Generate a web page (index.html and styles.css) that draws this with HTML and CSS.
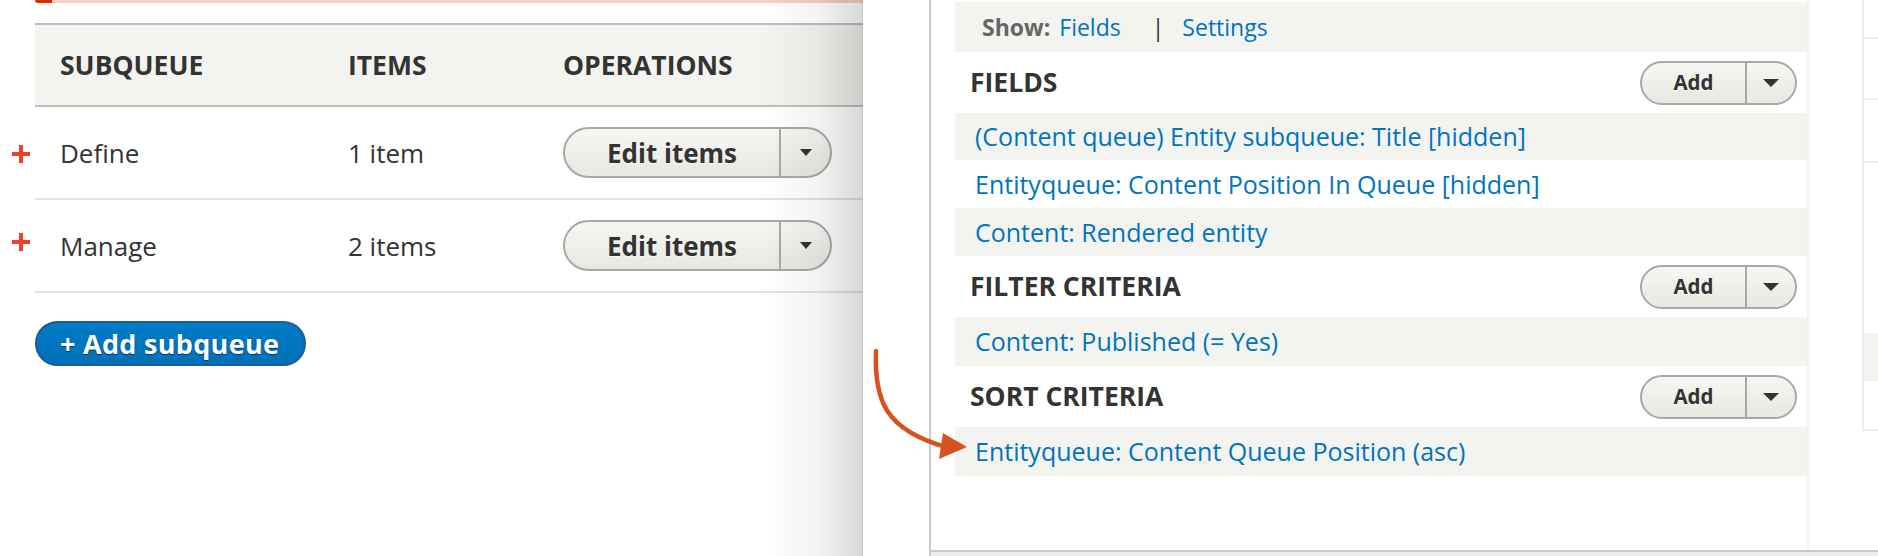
FILE: index.html
```html
<!DOCTYPE html>
<html lang="en">
<head>
<meta charset="utf-8">
<title>Entityqueue subqueues and view</title>
<link rel="stylesheet" href="styles.css">
</head>
<body>
<div class="page">
  <section class="left">
    <div class="msg-edge"></div>
    <div class="table">
      <div class="thead">
        <div class="th">Subqueue</div>
        <div class="th">Items</div>
        <div class="th">Operations</div>
      </div>
      <div class="tr">
        <div class="handle"><span class="cross"></span></div>
        <div class="cells">
          <div class="td">Define</div>
          <div class="td">1 item</div>
          <div class="td">
            <div class="dropbutton big"><span class="db-main">Edit items</span><span class="db-toggle"><span class="tri"></span></span></div>
          </div>
        </div>
      </div>
      <div class="tr">
        <div class="handle up"><span class="cross"></span></div>
        <div class="cells">
          <div class="td">Manage</div>
          <div class="td">2 items</div>
          <div class="td">
            <div class="dropbutton big"><span class="db-main">Edit items</span><span class="db-toggle"><span class="tri"></span></span></div>
          </div>
        </div>
      </div>
    </div>
    <a class="btn-primary">+ Add subqueue</a>
  </section>

  <section class="right">
    <div class="views-area">
      <div class="views-box">
        <div class="main-col">
          <div class="show-row">
            <span class="show-label">Show:</span>
            <a class="link">Fields</a>
            <span class="pipe">|</span>
            <a class="link">Settings</a>
          </div>

          <div class="vhead first">
            <h3>Fields</h3>
            <div class="dropbutton small"><span class="db-main">Add</span><span class="db-toggle"><span class="tri"></span></span></div>
          </div>
          <div class="vrow gray short"><a class="link">(Content queue) Entity subqueue: Title [hidden]</a></div>
          <div class="vrow"><a class="link">Entityqueue: Content Position In Queue [hidden]</a></div>
          <div class="vrow gray"><a class="link">Content: Rendered entity</a></div>

          <div class="vhead">
            <h3>Filter criteria</h3>
            <div class="dropbutton small"><span class="db-main">Add</span><span class="db-toggle"><span class="tri"></span></span></div>
          </div>
          <div class="vrow gray tall"><a class="link">Content: Published (= Yes)</a></div>

          <div class="vhead">
            <h3>Sort criteria</h3>
            <div class="dropbutton small"><span class="db-main">Add</span><span class="db-toggle"><span class="tri"></span></span></div>
          </div>
          <div class="vrow gray tall"><a class="link">Entityqueue: Content Queue Position (asc)</a></div>
        </div>
        <div class="side-col">
          <div class="side-box">
            <div class="sb a"></div>
            <div class="sb b"></div>
            <div class="sb c"></div>
            <div class="sb-space"></div>
            <div class="sb-gray"></div>
            <div class="sb-end"></div>
          </div>
        </div>
      </div>
    </div>
  </section>

  <svg class="arrow" width="120" height="140" viewBox="0 0 120 140" aria-hidden="true">
    <path d="M16 21 C 14 70, 25 100, 86 117" fill="none" stroke="#d6531f" stroke-width="4.5" stroke-linecap="round"/>
    <polygon points="107,117 83,103 79,129" fill="#d6531f"/>
  </svg>
</div>
</body>
</html>
```

FILE: styles.css
```css
* { box-sizing: border-box; }

html, body {
  margin: 0;
  padding: 0;
  background: #ffffff;
}

body {
  font-family: "Open Sans", "DejaVu Sans", sans-serif;
  color: #333333;
  line-height: 1;
}

.page {
  position: relative;
  display: flex;
  width: 1878px;
  height: 556px;
  overflow: hidden;
}

/* ---------- left panel ---------- */
.left {
  position: relative;
  width: 863px;
  flex: none;
  background: #ffffff;
}

.left::after {
  content: "";
  position: absolute;
  top: 0;
  right: 0;
  bottom: 0;
  width: 98px;
  background: linear-gradient(to right, rgba(0,0,0,0) 0%, rgba(0,0,0,0.05) 55%, rgba(0,0,0,0.15) 98%, rgba(0,0,0,0.22) 100%);
  pointer-events: none;
}

.msg-edge {
  margin-left: 35px;
  height: 3px;
  background: #f8cdc4;
  border-left: 17px solid #e32700;
  border-bottom-left-radius: 6px;
}

.table {
  margin-top: 20px;
}

.thead {
  margin-left: 35px;
  height: 84px;
  padding-left: 25px;
  background: #f3f3ef;
  border-top: 2px solid #bebfb9;
  border-bottom: 2px solid #bebfb9;
  display: grid;
  grid-template-columns: 288px 215px 1fr;
  align-items: center;
}

.th {
  font-size: 26.5px;
  font-weight: 700;
  text-transform: uppercase;
  color: #333333;
}

.tr {
  display: flex;
}

.handle {
  width: 35px;
  flex: none;
  display: flex;
  align-items: center;
  padding-left: 12px;
}

.handle.up {
  padding-bottom: 10px;
}

.cross {
  position: relative;
  display: block;
  width: 18px;
  height: 18px;
  background:
    linear-gradient(#f0402a, #f0402a) center / 18px 4px no-repeat,
    linear-gradient(#f0402a, #f0402a) center / 4px 18px no-repeat;
}

.cells {
  flex: 1;
  height: 93px;
  padding-left: 25px;
  border-bottom: 2px solid #e3e2dd;
  display: grid;
  grid-template-columns: 288px 215px 1fr;
  align-items: center;
}

.td {
  font-size: 26px;
  color: #333333;
}

/* ---------- dropbuttons ---------- */
.dropbutton {
  display: inline-flex;
  border: 2px solid #a8a8a6;
  border-radius: 30px;
  background: linear-gradient(to bottom, #f6f6f3, #e8e8e2);
  overflow: hidden;
  color: #333333;
  font-weight: 700;
  text-shadow: 0 1px 0 rgba(255,255,255,0.7);
}

.db-main {
  display: flex;
  align-items: center;
  justify-content: center;
  border-right: 2px solid #a8a8a6;
}

.db-toggle {
  display: flex;
  align-items: center;
  justify-content: center;
}

.tri {
  display: block;
  width: 0;
  height: 0;
}

.dropbutton.big {
  height: 51px;
  width: 269px;
}
.dropbutton.big .db-main {
  width: 216px;
  font-size: 26px;
}
.dropbutton.big .db-toggle {
  flex: 1;
}
.dropbutton.big .tri {
  border-left: 6px solid transparent;
  border-right: 6px solid transparent;
  border-top: 7px solid #333333;
}

.dropbutton.small {
  height: 44px;
  width: 157px;
}
.dropbutton.small .db-main {
  width: 105px;
  font-size: 20.5px;
}
.dropbutton.small .db-toggle {
  flex: 1;
}
.dropbutton.small .tri {
  border-left: 8px solid transparent;
  border-right: 8px solid transparent;
  border-top: 8px solid #333333;
}

/* ---------- primary button ---------- */
.btn-primary {
  display: flex;
  align-items: center;
  margin: 28px 0 0 35px;
  width: 271px;
  height: 45px;
  padding-left: 23px;
  border: 2px solid #1e5c90;
  border-radius: 24px;
  background: linear-gradient(to bottom, #007bc6, #0071b8);
  color: #ffffff;
  font-size: 27px;
  font-weight: 700;
  letter-spacing: 0.3px;
  text-shadow: 0 1px 1px rgba(0,0,0,0.5);
}

/* ---------- right panel ---------- */
.right {
  flex: 1;
  display: flex;
  padding-left: 66px;
  background: #ffffff;
}

.views-area {
  flex: 1;
  border-left: 2px solid #c9c9c7;
  background: #ececea;
}

.views-box {
  height: 552px;
  padding-left: 24px;
  background: #ffffff;
  border-bottom: 2px solid #c9c9c7;
  display: flex;
}

.main-col {
  width: 854px;
  flex: none;
  padding-top: 2px;
  border-right: 2px solid #f1f1ef;
}

.link {
  color: #0074bd;
  text-decoration: none;
}

.show-row {
  height: 50px;
  background: #f3f3ef;
  padding-left: 27px;
  display: flex;
  align-items: center;
  font-size: 23px;
}

.show-label {
  color: #666666;
  font-weight: 700;
  margin-right: 9px;
}

.pipe {
  color: #333333;
  margin: 0 18px 0 31px;
}

.vhead {
  height: 61px;
  padding: 0 10px 0 15px;
  background: #ffffff;
  display: flex;
  align-items: center;
  justify-content: space-between;
}

.vhead h3 {
  margin: 0;
  font-size: 26.5px;
  font-weight: 700;
  text-transform: uppercase;
  color: #333333;
}

.vrow {
  height: 48px;
  padding-left: 20px;
  display: flex;
  align-items: center;
  font-size: 25px;
  background: #ffffff;
}

.vrow.gray {
  background: #f3f3ef;
}

.vrow.short {
  height: 47px;
}

.vrow.tall {
  height: 49px;
}

.side-col {
  flex: 1;
  padding-left: 53px;
}

.side-box {
  height: 431px;
  border-left: 2px solid #ededeb;
  border-bottom: 2px solid #ededeb;
  display: flex;
  flex-direction: column;
}

.sb {
  border-bottom: 2px solid #ededeb;
}
.sb.a { height: 39px; }
.sb.b { height: 61px; }
.sb.c { height: 63px; }

.sb-space { height: 170px; }
.sb-gray { height: 48px; background: #f3f3ef; }
.sb-end { flex: 1; }

/* ---------- annotation arrow ---------- */
.arrow {
  position: absolute;
  left: 860px;
  top: 330px;
  pointer-events: none;
}
```
